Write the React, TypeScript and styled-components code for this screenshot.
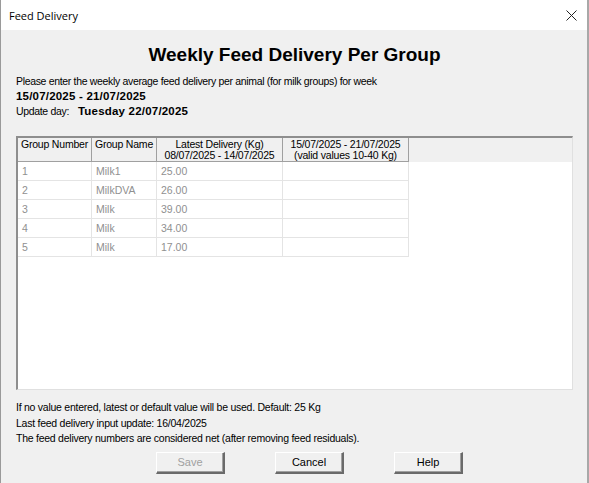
import React from "react";
import styled, { createGlobalStyle } from "styled-components";

const Global = createGlobalStyle`
  html, body { margin: 0; padding: 0; background: #ffffff; }
  body { font-family: "Liberation Sans", Arial, sans-serif; }
`;

const Window = styled.div`
  width: 589px;
  height: 483px;
  box-sizing: border-box;
  display: flex;
  flex-direction: column;
  border-left: 1px solid #9a9a9a;
  border-right: 2px solid #a8a8a8;
  overflow: hidden;
`;

const TitleBar = styled.div`
  height: 30px;
  flex: 0 0 30px;
  background: #ffffff;
  display: flex;
  align-items: center;
  justify-content: space-between;
  padding: 0 9px 0 8px;
  font-family: "Open Sans", "Noto Sans", sans-serif;
  font-size: 11px;
  color: #000;
`;

const CloseBtn = styled.div`
  width: 14px;
  height: 14px;
  display: flex;
  align-items: center;
  justify-content: center;
`;

const Body = styled.div`
  flex: 1;
  background: #f0f0f0;
  padding: 0 14px 0 15px;
  display: flex;
  flex-direction: column;
  font-size: 11px;
  color: #000;
`;

const Heading = styled.h1`
  margin: 12px 0 0 0;
  text-align: center;
  font-size: 19px;
  font-weight: bold;
  line-height: 26px;
`;

const InfoLine = styled.div<{ $bold?: boolean }>`
  line-height: 15px;
  font-size: ${(p) => (p.$bold ? "11.5px" : "10.5px")};
  font-weight: ${(p) => (p.$bold ? "bold" : "normal")};
  letter-spacing: ${(p) => (p.$bold ? "0.2px" : "-0.33px")};
`;

const FirstInfo = styled(InfoLine)`
  margin-top: 6px;
`;

const Strong = styled.span`
  font-weight: bold;
  font-size: 11.5px;
  letter-spacing: 0.2px;
  margin-left: 9px;
`;

const TableBox = styled.div`
  margin-top: 17px;
  height: 254px;
  flex: 0 0 254px;
  box-sizing: border-box;
  background: #ffffff;
  border-top: 2px solid #8e8e8e;
  border-left: 2px solid #8e8e8e;
  border-right: 1px solid #e0e0e0;
  border-bottom: 1px solid #e0e0e0;
  display: flex;
  flex-direction: column;
`;

const HeaderBand = styled.div`
  height: 24px;
  flex: 0 0 24px;
  background: #f0f0f0;
  display: flex;
`;

const HeaderCell = styled.div<{ $w: number }>`
  width: ${(p) => p.$w}px;
  box-sizing: border-box;
  border-right: 1px solid #a0a0a0;
  border-bottom: 1px solid #a0a0a0;
  text-align: center;
  font-size: 10.5px;
  line-height: 11px;
  padding-top: 1px;
  letter-spacing: -0.2px;
  color: #000;
`;

const Row = styled.div`
  display: flex;
  height: 19px;
  flex: 0 0 19px;
`;

const Cell = styled.div<{ $w: number }>`
  width: ${(p) => p.$w}px;
  box-sizing: border-box;
  border-right: 1px solid #e4e4e4;
  border-bottom: 1px solid #e4e4e4;
  padding-left: 4px;
  font-size: 10.5px;
  line-height: 18px;
  color: #909090;
`;

const Notes = styled.div`
  margin-top: 10px;
  display: flex;
  flex-direction: column;
`;

const Note = styled.div`
  font-size: 10.5px;
  line-height: 15.5px;
  letter-spacing: -0.25px;
`;

const Buttons = styled.div`
  margin-top: 5px;
  display: flex;
  gap: 50px;
  padding-left: 140px;
`;

const Button = styled.button`
  width: 69px;
  height: 22px;
  box-sizing: border-box;
  background: #f0f0f0;
  border: none;
  border-top: 1px solid #ffffff;
  border-left: 1px solid #ffffff;
  border-right: 2px solid #6a6a6a;
  border-bottom: 2px solid #6a6a6a;
  box-shadow: inset -1px -1px 0 #a0a0a0;
  font-family: "Liberation Sans", Arial, sans-serif;
  font-size: 11px;
  color: #000;
  padding: 0;
  &:disabled { color: #a0a0a0; }
`;

const cols = [74, 65, 126, 126];

const rows = [
  ["1", "Milk1", "25.00", ""],
  ["2", "MilkDVA", "26.00", ""],
  ["3", "Milk", "39.00", ""],
  ["4", "Milk", "34.00", ""],
  ["5", "Milk", "17.00", ""],
];

export default function App() {
  return (
    <>
      <Global />
      <Window>
        <TitleBar>
          <span>Feed Delivery</span>
          <CloseBtn>
            <svg width="11" height="11" viewBox="0 0 11 11">
              <path d="M0.5 0.5 L10.5 10.5 M10.5 0.5 L0.5 10.5" stroke="#222" strokeWidth="1" />
            </svg>
          </CloseBtn>
        </TitleBar>
        <Body>
          <Heading>Weekly Feed Delivery Per Group</Heading>
          <FirstInfo>Please enter the weekly average feed delivery per animal (for milk groups) for week</FirstInfo>
          <InfoLine $bold>15/07/2025 - 21/07/2025</InfoLine>
          <InfoLine>
            Update day:<Strong>Tuesday 22/07/2025</Strong>
          </InfoLine>
          <TableBox>
            <HeaderBand>
              <HeaderCell $w={cols[0]}>Group Number</HeaderCell>
              <HeaderCell $w={cols[1]}>Group Name</HeaderCell>
              <HeaderCell $w={cols[2]}>
                Latest Delivery (Kg)
                <br />
                08/07/2025 - 14/07/2025
              </HeaderCell>
              <HeaderCell $w={cols[3]}>
                15/07/2025 - 21/07/2025
                <br />
                (valid values 10-40 Kg)
              </HeaderCell>
            </HeaderBand>
            {rows.map((r, i) => (
              <Row key={i}>
                {r.map((c, j) => (
                  <Cell key={j} $w={cols[j]}>
                    {c}
                  </Cell>
                ))}
              </Row>
            ))}
          </TableBox>
          <Notes>
            <Note>If no value entered, latest or default value will be used. Default: 25 Kg</Note>
            <Note>Last feed delivery input update: 16/04/2025</Note>
            <Note>The feed delivery numbers are considered net (after removing feed residuals).</Note>
          </Notes>
          <Buttons>
            <Button disabled>Save</Button>
            <Button>Cancel</Button>
            <Button>Help</Button>
          </Buttons>
        </Body>
      </Window>
    </>
  );
}
